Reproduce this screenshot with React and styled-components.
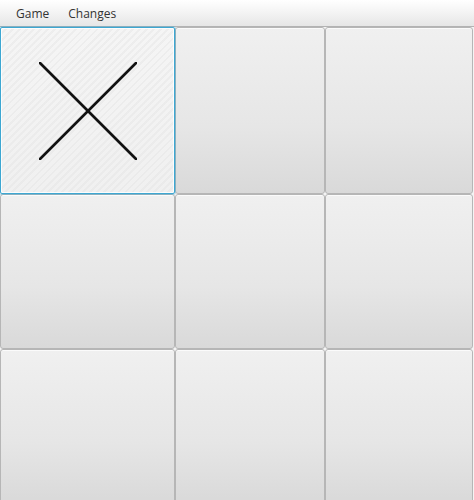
import React from "react";
import styled, { createGlobalStyle, css } from "styled-components";

const Global = createGlobalStyle`
  html, body { margin: 0; padding: 0; background: #f4f4f4; overflow: hidden; }
  body { font-family: "Open Sans", "Noto Sans", sans-serif; }
`;

const Window = styled.div`
  width: 474px;
  height: 500px;
  display: flex;
  flex-direction: column;
  background: #f4f4f4;
  overflow: hidden;
`;

const MenuBar = styled.div`
  height: 26px;
  flex: none;
  display: flex;
  align-items: center;
  gap: 19px;
  padding-left: 16px;
  background: linear-gradient(to bottom, #ffffff 0%, #f3f3f3 50%, #e6e6e6 100%);
  border-bottom: 1px solid #b3b3b3;
`;

const MenuItem = styled.span`
  font-size: 12px;
  color: #333333;
  line-height: 1;
  padding-top: 1px;
`;

const Board = styled.div`
  display: grid;
  grid-template-columns: 175px 150px 148px;
  grid-template-rows: 167px 155px 155px;
`;

const Cell = styled.div`
  box-sizing: border-box;
  position: relative;
  display: flex;
  align-items: center;
  justify-content: center;
  border: 1px solid #b6b6b6;
  border-radius: 3px;
  background: linear-gradient(to bottom, #f0f0f0 0%, #e6e6e6 60%, #d9d9d9 100%);
  box-shadow: inset 0 1px 0 rgba(255, 255, 255, 0.7);
  ${(p) =>
    p.$focused &&
    css`
      border: 1px solid #3da7d2;
      border-radius: 2px;
      background:
        repeating-linear-gradient(135deg, rgba(255,255,255,0) 0px, rgba(255,255,255,0) 3px, rgba(226,226,226,0.4) 3px, rgba(226,226,226,0.4) 5px),
        linear-gradient(to bottom, #f5f5f5, #f0f0f0);
      box-shadow: 0 0 0 1px rgba(61, 167, 210, 0.35), inset 0 0 0 1px rgba(255,255,255,0.8);
      z-index: 1;
    `}
`;

const Cross = () => (
  <svg width="98" height="98" viewBox="0 0 98 98">
    <g stroke="#111" strokeWidth="2.6" strokeLinecap="round">
      <line x1="1" y1="1" x2="97" y2="97" />
      <line x1="97" y1="1" x2="1" y2="97" />
    </g>
  </svg>
);

export default function App() {
  const cells = Array.from({ length: 9 }, (_, i) => i);
  return (
    <Window>
      <Global />
      <MenuBar>
        <MenuItem>Game</MenuItem>
        <MenuItem>Changes</MenuItem>
      </MenuBar>
      <Board>
        {cells.map((i) => (
          <Cell key={i} $focused={i === 0}>
            {i === 0 && <Cross />}
          </Cell>
        ))}
      </Board>
    </Window>
  );
}
